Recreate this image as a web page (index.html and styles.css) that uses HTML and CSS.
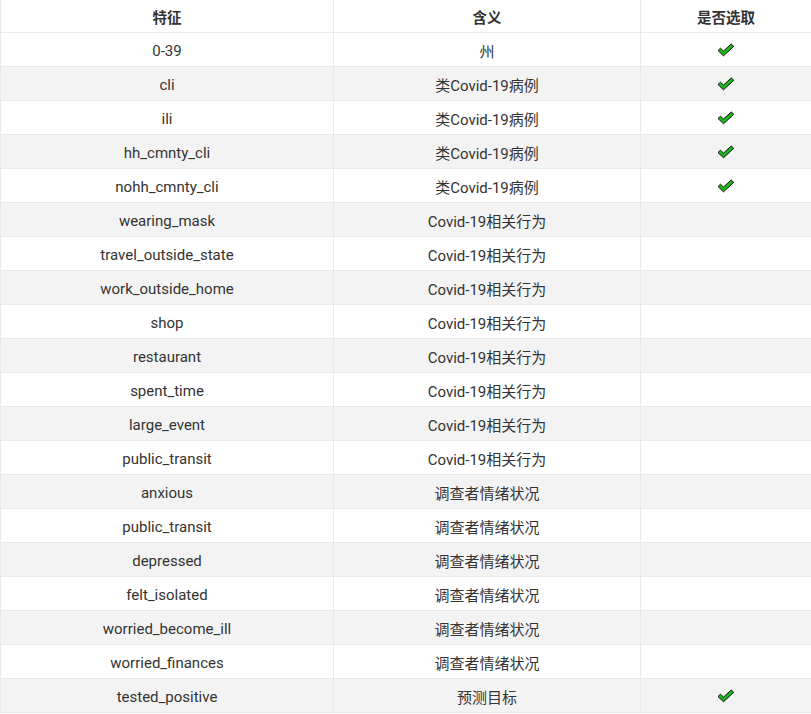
FILE: index.html
```html
<!DOCTYPE html>
<html lang="zh">
<head>
<meta charset="utf-8">
<link rel="stylesheet" href="styles.css">
</head>
<body>
<div class="table">
  <div class="row head"><div class="c c1">特征</div><div class="c c2">含义</div><div class="c c3">是否选取</div></div>
  <div class="row"><div class="c c1">0-39</div><div class="c c2">州</div><div class="c c3"><svg class="chk" viewBox="0 0 18 14"><path d="M1 7.5 L3.5 5.2 L6.5 8 L14.3 1 L16.8 3.3 L6.5 12.8 Z"/></svg></div></div>
  <div class="row alt"><div class="c c1">cli</div><div class="c c2">类Covid-19病例</div><div class="c c3"><svg class="chk" viewBox="0 0 18 14"><path d="M1 7.5 L3.5 5.2 L6.5 8 L14.3 1 L16.8 3.3 L6.5 12.8 Z"/></svg></div></div>
  <div class="row"><div class="c c1">ili</div><div class="c c2">类Covid-19病例</div><div class="c c3"><svg class="chk" viewBox="0 0 18 14"><path d="M1 7.5 L3.5 5.2 L6.5 8 L14.3 1 L16.8 3.3 L6.5 12.8 Z"/></svg></div></div>
  <div class="row alt"><div class="c c1">hh_cmnty_cli</div><div class="c c2">类Covid-19病例</div><div class="c c3"><svg class="chk" viewBox="0 0 18 14"><path d="M1 7.5 L3.5 5.2 L6.5 8 L14.3 1 L16.8 3.3 L6.5 12.8 Z"/></svg></div></div>
  <div class="row"><div class="c c1">nohh_cmnty_cli</div><div class="c c2">类Covid-19病例</div><div class="c c3"><svg class="chk" viewBox="0 0 18 14"><path d="M1 7.5 L3.5 5.2 L6.5 8 L14.3 1 L16.8 3.3 L6.5 12.8 Z"/></svg></div></div>
  <div class="row alt"><div class="c c1">wearing_mask</div><div class="c c2">Covid-19相关行为</div><div class="c c3"></div></div>
  <div class="row"><div class="c c1">travel_outside_state</div><div class="c c2">Covid-19相关行为</div><div class="c c3"></div></div>
  <div class="row alt"><div class="c c1">work_outside_home</div><div class="c c2">Covid-19相关行为</div><div class="c c3"></div></div>
  <div class="row"><div class="c c1">shop</div><div class="c c2">Covid-19相关行为</div><div class="c c3"></div></div>
  <div class="row alt"><div class="c c1">restaurant</div><div class="c c2">Covid-19相关行为</div><div class="c c3"></div></div>
  <div class="row"><div class="c c1">spent_time</div><div class="c c2">Covid-19相关行为</div><div class="c c3"></div></div>
  <div class="row alt"><div class="c c1">large_event</div><div class="c c2">Covid-19相关行为</div><div class="c c3"></div></div>
  <div class="row"><div class="c c1">public_transit</div><div class="c c2">Covid-19相关行为</div><div class="c c3"></div></div>
  <div class="row alt"><div class="c c1">anxious</div><div class="c c2">调查者情绪状况</div><div class="c c3"></div></div>
  <div class="row"><div class="c c1">public_transit</div><div class="c c2">调查者情绪状况</div><div class="c c3"></div></div>
  <div class="row alt"><div class="c c1">depressed</div><div class="c c2">调查者情绪状况</div><div class="c c3"></div></div>
  <div class="row"><div class="c c1">felt_isolated</div><div class="c c2">调查者情绪状况</div><div class="c c3"></div></div>
  <div class="row alt"><div class="c c1">worried_become_ill</div><div class="c c2">调查者情绪状况</div><div class="c c3"></div></div>
  <div class="row"><div class="c c1">worried_finances</div><div class="c c2">调查者情绪状况</div><div class="c c3"></div></div>
  <div class="row alt"><div class="c c1">tested_positive</div><div class="c c2">预测目标</div><div class="c c3"><svg class="chk" viewBox="0 0 18 14"><path d="M1 7.5 L3.5 5.2 L6.5 8 L14.3 1 L16.8 3.3 L6.5 12.8 Z"/></svg></div></div>
</div>
</body>
</html>
```

FILE: styles.css
```css
* { box-sizing: border-box; }
html, body { margin: 0; padding: 0; background: #fff; }
body {
  font-family: Roboto, "Noto Sans CJK SC", sans-serif;
  font-size: 15px;
  color: #333;
}
.table { width: 811px; }
.row {
  display: grid;
  grid-template-columns: 334px 307px 170px;
  height: 34px;
}
.row.head { height: 33px; font-weight: bold; font-size: 14.5px; }
.row.alt { background: #f3f3f3; }
.c {
  display: flex;
  align-items: center;
  justify-content: center;
  border-bottom: 1px solid #e9e9e9;
  white-space: nowrap;
  padding-top: 1px;
}
.c1 { border-left: 1px solid #e9e9e9; border-right: 1px solid #e9e9e9; padding-top: 2px; }
.head .c1 { padding-top: 1px; }
.c2 { border-right: 1px solid #e9e9e9; }
.chk { width: 18px; height: 14px; margin-top: -1px; }
.chk path { fill: #1db51d; stroke: #111; stroke-width: 1; stroke-linejoin: miter; }
```
